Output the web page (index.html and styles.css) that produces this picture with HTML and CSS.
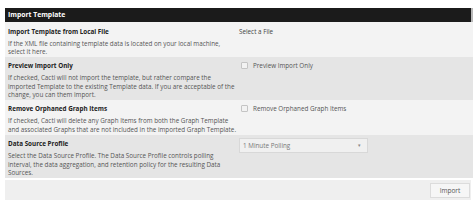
FILE: index.html
```html
<!DOCTYPE html>
<html>
<head>
<meta charset="utf-8">
<link rel="stylesheet" href="styles.css">
</head>
<body>
<div class="panel">
  <div class="header">Import Template</div>
  <div class="row light">
    <div class="label">
      <div class="title">Import Template from Local File</div>
      <div class="desc">If the XML file containing template data is located on your local machine,<br>select it here.</div>
    </div>
    <div class="field"><span class="plain">Select a File</span></div>
  </div>
  <div class="row dark">
    <div class="label">
      <div class="title">Preview Import Only</div>
      <div class="desc">If checked, Cacti will not import the template, but rather compare the<br>imported Template to the existing Template data. If you are acceptable of the<br>change, you can them import.</div>
    </div>
    <div class="field"><label class="check"><span class="box"></span>Preview Import Only</label></div>
  </div>
  <div class="row light">
    <div class="label">
      <div class="title">Remove Orphaned Graph Items</div>
      <div class="desc">If checked, Cacti will delete any Graph Items from both the Graph Template<br>and associated Graphs that are not included in the imported Graph Template.</div>
    </div>
    <div class="field"><label class="check"><span class="box"></span>Remove Orphaned Graph Items</label></div>
  </div>
  <div class="row dark">
    <div class="label">
      <div class="title">Data Source Profile</div>
      <div class="desc">Select the Data Source Profile. The Data Source Profile controls polling<br>interval, the data aggregation, and retention policy for the resulting Data<br>Sources.</div>
    </div>
    <div class="field sel"><div class="select"><span>1 Minute Polling</span><span class="arrow">&#9662;</span></div></div>
  </div>
  <div class="actions"><button class="btn">Import</button></div>
</div>
</body>
</html>
```
FILE: styles.css
```css
html, body {
  margin: 0;
  padding: 0;
  background: #ffffff;
}
body {
  font-family: "Open Sans", "Noto Sans", sans-serif;
  font-size: 6.3px;
  line-height: 8.6px;
  color: #444;
}
.panel {
  margin: 8px 1px 0 5px;
}
.header {
  background: #1b1b1b;
  color: #ffffff;
  font-weight: bold;
  height: 14px;
  line-height: 14px;
  padding-left: 3px;
  border-right: 2px solid #b8b8b8;
  font-size: 6.8px;
}
.row {
  display: grid;
  grid-template-columns: 234px 1fr;
}
.row.light { background: #f3f3f3; }
.row.dark { background: #e5e5e5; }
.label {
  padding: 4.5px 0 0 3px;
  white-space: nowrap;
}
.title {
  font-weight: bold;
  color: #222;
  line-height: 9px;
  margin-bottom: 4px;
}
.desc {
  color: #555;
}
.field {
  padding-top: 4.5px;
  line-height: 9px;
  color: #444;
}
.field.sel {
  padding-top: 3px;
}
.check {
  display: flex;
  align-items: center;
  gap: 5px;
  padding-left: 2px;
  color: #555;
}
.box {
  width: 5px;
  height: 5px;
  border: 1px solid #c4c4c4;
  background: #f2f2f2;
  border-radius: 1px;
}
.select {
  width: 118px;
  height: 13px;
  border: 1px solid #d8d8d8;
  background: #f0f0f0;
  display: flex;
  align-items: center;
  justify-content: space-between;
  padding: 0 6px 0 3px;
  color: #777;
}
.arrow {
  font-size: 5px;
  color: #888;
}
.actions {
  margin-top: 2px;
  margin-right: 2px;
  background: #efefef;
  height: 20px;
  display: flex;
  align-items: center;
  justify-content: flex-end;
  padding-right: 1px;
}
.btn {
  font-family: "Open Sans", "Noto Sans", sans-serif;
  font-size: 6.5px;
  color: #555;
  background: #f6f6f6;
  border: 1px solid #dcdcdc;
  width: 40px;
  height: 15px;
  padding: 0;
  margin-top: 1px;
}
```
